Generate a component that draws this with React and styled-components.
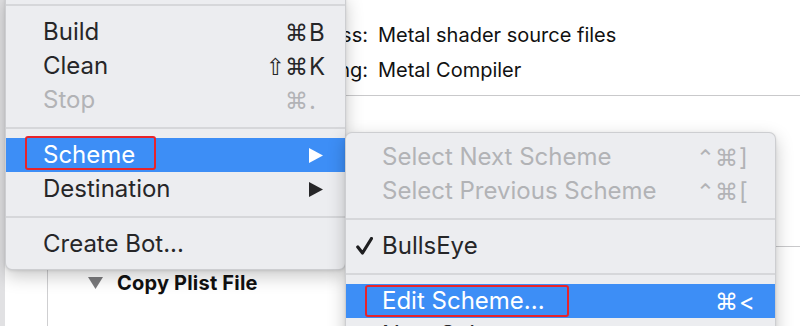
import styled, { createGlobalStyle } from 'styled-components';

const Global = createGlobalStyle`
  html, body {
    margin: 0;
    padding: 0;
    background: #fff;
  }
  body {
    font-family: Inter, "DejaVu Sans", sans-serif;
  }
`;

const Page = styled.div`
  position: relative;
  width: 800px;
  height: 326px;
  overflow: hidden;
  background: #fff;
  display: flex;
`;

const Sidebar = styled.div`
  width: 5px;
  background: #e1e1e3;
  flex-shrink: 0;
`;

const Content = styled.div`
  flex: 1;
  display: flex;
  flex-direction: column;
`;

const InfoGrid = styled.div`
  display: grid;
  grid-template-columns: 363px auto;
  column-gap: 10px;
  padding-top: 18px;
  font-size: 20px;
  line-height: 35px;
  color: #111;
`;

const InfoLabel = styled.div`
  text-align: right;
`;

const InfoValue = styled.div``;

const Rule = styled.div`
  height: 1px;
  background: #c9c9cb;
  margin-top: ${(p) => p.$top || 0}px;
`;

const Panel = styled.div`
  flex: 1;
  margin-left: 42px;
  border-left: 1px solid #cfcfd1;
  padding-top: 150px;
  display: flex;
  flex-direction: column;
`;

const Disclosure = styled.div`
  display: flex;
  align-items: center;
  gap: 14px;
  margin-top: 21px;
  padding-left: 40px;
  height: 30px;
  font-weight: 700;
  font-size: 20px;
  letter-spacing: 0.2px;
  color: #111;
`;

const Menu = styled.div`
  position: absolute;
  left: ${(p) => p.$left}px;
  top: ${(p) => p.$top}px;
  width: ${(p) => p.$width}px;
  padding-top: ${(p) => p.$padTop || 0}px;
  padding-bottom: 8px;
  background: #ecedf0;
  border: 1px solid rgba(0, 0, 0, 0.13);
  border-radius: 7px;
  box-shadow: 0 6px 18px rgba(0, 0, 0, 0.22), 0 1px 3px rgba(0, 0, 0, 0.1);
  font-size: 24px;
  color: #262628;
  box-sizing: border-box;
`;

const Separator = styled.div`
  height: 21px;
  display: flex;
  align-items: center;
  &::after {
    content: '';
    flex: 1;
    height: 2px;
    background: #d6d7da;
  }
`;

const Item = styled.div`
  display: flex;
  align-items: center;
  height: 34px;
  padding-right: ${(p) => p.$right}px;
  color: ${(p) => (p.$active ? '#fff' : p.$disabled ? '#b2b3b6' : '#262628')};
  background: ${(p) => (p.$active ? '#3d8ef6' : 'transparent')};
`;

const Gutter = styled.div`
  width: ${(p) => p.$w}px;
  flex-shrink: 0;
  display: flex;
  align-items: center;
  padding-left: 10px;
  box-sizing: border-box;
`;

const Label = styled.span`
  position: relative;
  flex: 1;
  line-height: 34px;
  white-space: nowrap;
`;

const LabelText = styled.span`
  position: relative;
`;

const Marker = styled.span`
  position: absolute;
  left: ${(p) => p.$left}px;
  right: ${(p) => p.$right}px;
  top: ${(p) => p.$top}px;
  bottom: ${(p) => p.$bottom}px;
  border: 2px solid #e8242a;
  border-radius: 3px;
`;

const Keys = styled.span`
  display: flex;
  align-items: baseline;
  font-family: "DejaVu Sans", sans-serif;
  font-size: 23px;
`;

const Mods = styled.span`
  text-align: right;
  margin-right: 1px;
`;

const Key = styled.span`
  width: 20px;
  text-align: left;
  font-family: Inter, "DejaVu Sans", sans-serif;
  font-size: 24px;
`;

const ArrowSlot = styled.span`
  width: 20px;
  display: flex;
  justify-content: flex-start;
`;

function Arrow({ color }) {
  return (
    <svg width="14" height="15" viewBox="0 0 14 15">
      <polygon points="0,0 14,7.5 0,15" fill={color} />
    </svg>
  );
}

function Check() {
  return (
    <svg width="17" height="18" viewBox="0 0 17 18">
      <polyline
        points="1.8,10 6.5,16 15.5,1.5"
        fill="none"
        stroke="#1e1e20"
        strokeWidth="3.2"
        strokeLinecap="round"
        strokeLinejoin="round"
      />
    </svg>
  );
}

function Shortcut({ mods, k }) {
  return (
    <Keys>
      <Mods>{mods}</Mods>
      <Key>{k}</Key>
    </Keys>
  );
}

function MainMenu() {
  return (
    <Menu $left={5} $top={-7} $width={341}>
      <Separator />
      <Item $right={16}>
        <Gutter $w={37} />
        <Label>Build</Label>
        <Shortcut mods="⌘" k="B" />
      </Item>
      <Item $right={16}>
        <Gutter $w={37} />
        <Label>Clean</Label>
        <Shortcut mods="⇧⌘" k="K" />
      </Item>
      <Item $right={16} $disabled>
        <Gutter $w={37} />
        <Label>Stop</Label>
        <Shortcut mods="⌘" k="." />
      </Item>
      <Separator />
      <Item $right={16} $active>
        <Gutter $w={37} />
        <Label>
          <LabelText>
            Scheme
            <Marker $left={-18} $right={-21} $top={-4} $bottom={-1} />
          </LabelText>
        </Label>
        <ArrowSlot>
          <Arrow color="#fff" />
        </ArrowSlot>
      </Item>
      <Item $right={16}>
        <Gutter $w={37} />
        <Label>Destination</Label>
        <ArrowSlot>
          <Arrow color="#262628" />
        </ArrowSlot>
      </Item>
      <Separator />
      <Item $right={16}>
        <Gutter $w={37} />
        <Label>Create Bot...</Label>
      </Item>
    </Menu>
  );
}

function SchemeMenu() {
  return (
    <Menu $left={345} $top={132} $width={431} $padTop={7}>
      <Item $right={16} $disabled>
        <Gutter $w={36} />
        <Label>Select Next Scheme</Label>
        <Shortcut mods="⌃⌘" k="]" />
      </Item>
      <Item $right={16} $disabled>
        <Gutter $w={36} />
        <Label>Select Previous Scheme</Label>
        <Shortcut mods="⌃⌘" k="[" />
      </Item>
      <Separator />
      <Item $right={16}>
        <Gutter $w={36}>
          <Check />
        </Gutter>
        <Label>BullsEye</Label>
      </Item>
      <Separator />
      <Item $right={16} $active>
        <Gutter $w={36} />
        <Label>
          <LabelText>
            Edit Scheme...
            <Marker $left={-17} $right={-24} $top={-1} $bottom={-2} />
          </LabelText>
        </Label>
        <Shortcut mods="⌘" k="<" />
      </Item>
      <Item $right={16}>
        <Gutter $w={36} />
        <Label>New Scheme...</Label>
      </Item>
    </Menu>
  );
}

export default function App() {
  return (
    <>
      <Global />
      <Page>
        <Sidebar />
        <Content>
          <InfoGrid>
            <InfoLabel>Process:</InfoLabel>
            <InfoValue>Metal shader source files</InfoValue>
            <InfoLabel>Using:</InfoLabel>
            <InfoValue>Metal Compiler</InfoValue>
          </InfoGrid>
          <Rule $top={7} />
          <Panel>
            <Rule />
            <Disclosure>
              <svg width="15" height="12" viewBox="0 0 15 12">
                <polygon points="0,0 15,0 7.5,12" fill="#7b7b7d" />
              </svg>
              Copy Plist File
            </Disclosure>
          </Panel>
        </Content>
        <MainMenu />
        <SchemeMenu />
      </Page>
    </>
  );
}
